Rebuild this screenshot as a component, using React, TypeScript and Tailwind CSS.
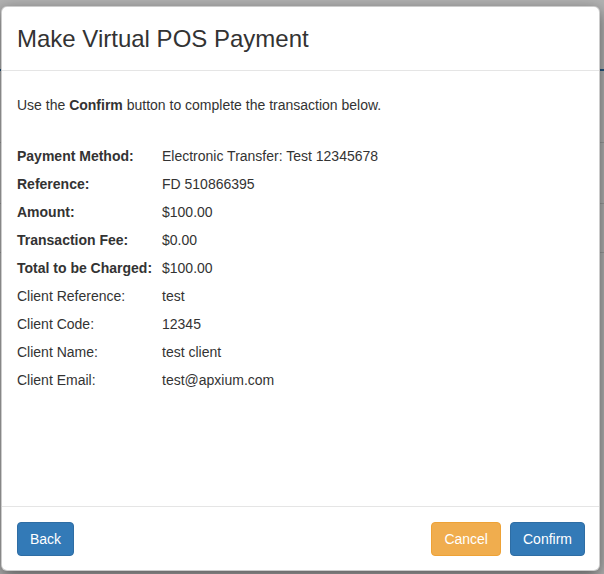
const rows: { label: string; value: string; strong?: boolean }[] = [
  { label: 'Payment Method:', value: 'Electronic Transfer: Test 12345678', strong: true },
  { label: 'Reference:', value: 'FD 510866395', strong: true },
  { label: 'Amount:', value: '$100.00', strong: true },
  { label: 'Transaction Fee:', value: '$0.00', strong: true },
  { label: 'Total to be Charged:', value: '$100.00', strong: true },
  { label: 'Client Reference:', value: 'test' },
  { label: 'Client Code:', value: '12345' },
  { label: 'Client Name:', value: 'test client' },
  { label: 'Client Email:', value: 'test@apxium.com' },
]

// the page under the backdrop, only its edges show
const PageBehind = () => (
  <div className="flex flex-col">
    <div className="h-[69px]" />
    <div className="h-[2px] bg-[#337ab7]" />
    <div className="h-[71px]" />
    <div className="h-px bg-[#ddd]" />
    <div className="h-[60px]" />
    <div className="h-px bg-[#ddd]" />
    <div className="h-[48px]" />
    <div className="h-px bg-[#ddd]" />
  </div>
)

export default function App() {
  return (
    <div className="relative h-[574px] w-full overflow-hidden bg-white font-['Liberation_Sans',Arial,sans-serif] text-[14px] text-[#333]">
      <PageBehind />
      <div className="absolute inset-0 bg-black/30" />

      <div className="absolute left-[1px] top-[6px] flex h-[565px] w-[599px] flex-col rounded-[6px] border border-black/20 bg-white shadow-[0_5px_15px_rgba(0,0,0,0.5)]">
        <div className="border-b border-[#e5e5e5] px-[15px] py-[14px]">
          <h4 className="text-[24px] leading-[35px]">Make Virtual POS Payment</h4>
        </div>

        <div className="flex-1 px-[15px] pt-[24px]">
          <p className="leading-[20px]">
            Use the <strong>Confirm</strong> button to complete the transaction below.
          </p>

          <div className="mt-[27px]">
            {rows.map((row) => (
              <div key={row.label} className="flex h-[28px] items-center">
                <div className={`w-[145px] ${row.strong ? 'font-bold' : ''}`}>{row.label}</div>
                <div>{row.value}</div>
              </div>
            ))}
          </div>
        </div>

        <div className="flex items-center border-t border-[#e5e5e5] pb-[14px] pl-[15px] pr-[14px] pt-[15px]">
          <button className="h-[34px] rounded-[4px] border border-[#2e6da4] bg-[#337ab7] px-[12px] text-white">
            Back
          </button>
          <div className="ml-auto flex gap-[9px]">
            <button className="h-[34px] rounded-[4px] border border-[#eea236] bg-[#f0ad4e] px-[12px] text-white">
              Cancel
            </button>
            <button className="h-[34px] rounded-[4px] border border-[#2e6da4] bg-[#337ab7] px-[12px] text-white">
              Confirm
            </button>
          </div>
        </div>
      </div>
    </div>
  )
}
